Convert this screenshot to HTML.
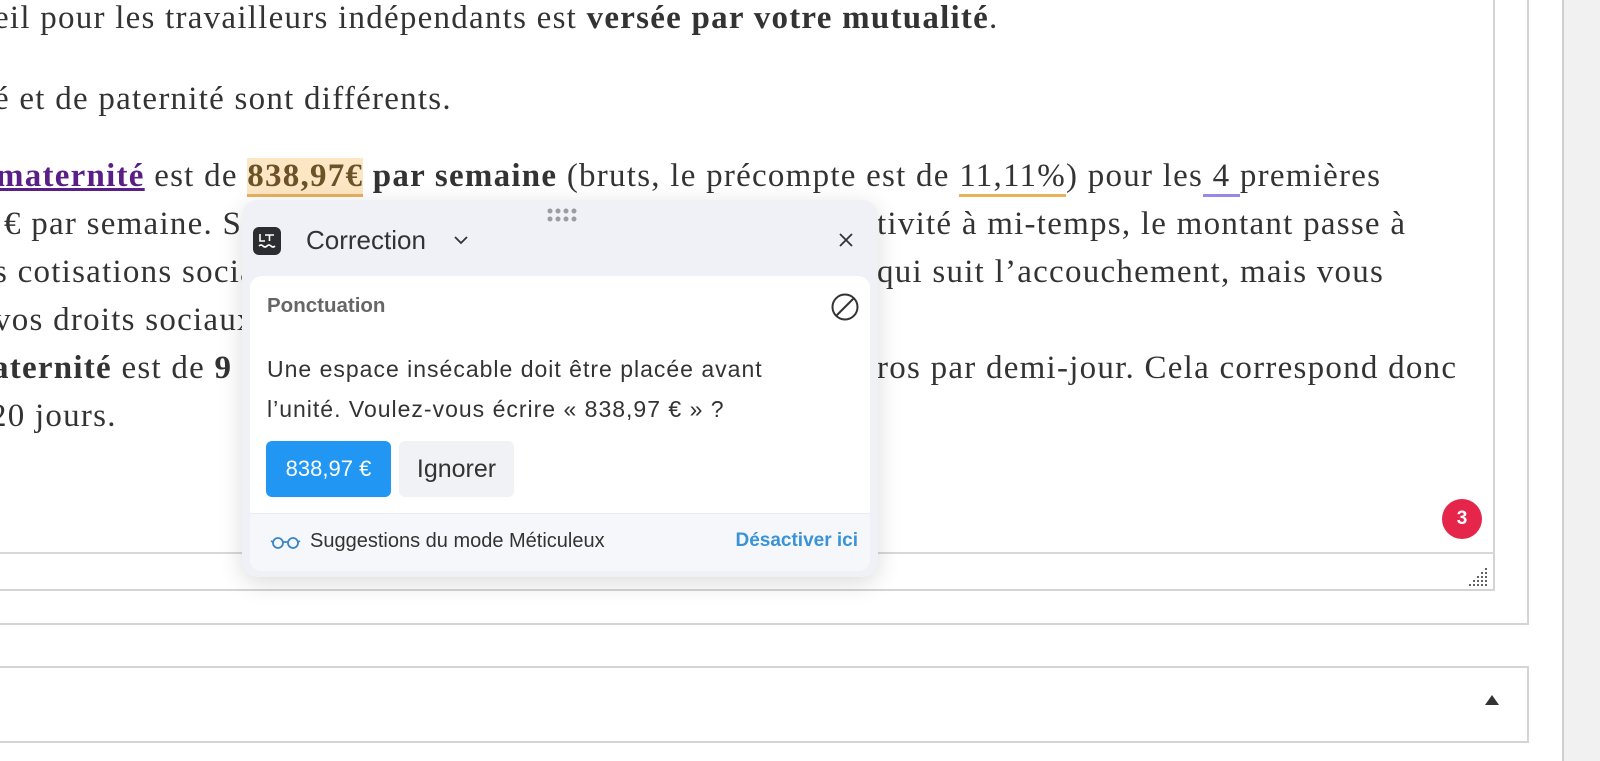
<!DOCTYPE html>
<html><head><meta charset="utf-8"><style>
body{margin:0;width:1600px;height:761px;overflow:hidden;background:#fff;position:relative;font-family:"Liberation Serif",serif;color:#333}
.l{position:absolute;white-space:nowrap;font-size:33px;letter-spacing:1.25px;line-height:40px;color:#333}
b{font-weight:bold}
.box{position:absolute;border:2px solid #d4d4d4;box-sizing:border-box}
.s{font-family:"Liberation Sans",sans-serif}
</style></head><body>
<div class="box" style="left:-4px;top:-4px;width:1533px;height:629px"></div>
<div class="box" style="left:-4px;top:-4px;width:1499px;height:595px"></div>
<div style="position:absolute;left:0;top:552px;width:1494px;height:2px;background:#d8d8d8"></div>
<div class="box" style="left:-4px;top:666px;width:1533px;height:77px"></div>
<div style="position:absolute;left:1562px;top:0;width:38px;height:761px;background:#f1f1f1;border-left:2px solid #cfcfcf"></div>
<div class="s" style="position:absolute;left:1442px;top:499px;width:40px;height:40px;border-radius:50%;background:#e5254a;color:#fff;font-weight:bold;font-size:19px;text-align:center;line-height:40px">3</div>
<div style="position:absolute;left:1485px;top:695px;width:0;height:0;border-left:7px solid transparent;border-right:7px solid transparent;border-bottom:10px solid #333"></div>
<svg style="position:absolute;left:1468px;top:566px" width="22" height="22"><g fill="#333"><circle cx="18" cy="3" r="1"/><circle cx="18" cy="7" r="1"/><circle cx="14" cy="7" r="1"/><circle cx="18" cy="11" r="1"/><circle cx="14" cy="11" r="1"/><circle cx="10" cy="11" r="1"/><circle cx="18" cy="15" r="1"/><circle cx="14" cy="15" r="1"/><circle cx="10" cy="15" r="1"/><circle cx="6" cy="15" r="1"/><circle cx="18" cy="19" r="1"/><circle cx="14" cy="19" r="1"/><circle cx="10" cy="19" r="1"/><circle cx="6" cy="19" r="1"/><circle cx="2" cy="19" r="1"/></g></svg>

<div class="l" style="left:-6px;top:-2px">eil pour les travailleurs indépendants est <b>versée par votre mutualité</b>.</div>
<div class="l" style="left:-6px;top:79px">é et de paternité sont différents.</div>
<div class="l" style="left:-4px;top:156px"><b style="color:#5a1f87;text-decoration:underline">maternité</b> est de <b style="background:#fde6c4;color:#6b5228;border-bottom:3px solid #e6b060">838,97€</b> <b>par semaine</b> (bruts, le précompte est de <span style="border-bottom:3px solid #e8b25a">11,11%</span>) pour les<span style="border-bottom:3px solid #9b87e8"> 4 </span>premières</div>
<div class="l" style="left:4px;top:204px">€ par semaine. S’</div>
<div class="l" style="left:877px;top:204px">tivité à mi-temps, le montant passe à</div>
<div class="l" style="left:-6px;top:252px">s cotisations socia</div>
<div class="l" style="left:877px;top:252px">qui suit l’accouchement, mais vous</div>
<div class="l" style="left:-6px;top:300px">vos droits sociaux</div>
<div class="l" style="left:-8px;top:348px"><b>aternité</b> est de <b>9</b></div>
<div class="l" style="left:877px;top:348px">ros par demi-jour. Cela correspond donc</div>
<div class="l" style="left:-10px;top:396px">20 jours.</div>

<div class="s" style="position:absolute;left:242px;top:200px;width:636px;height:377px;background:#eff1f6;border-radius:16px;box-shadow:0 6px 24px rgba(0,0,0,.14)">
  <svg style="position:absolute;left:305px;top:8px" width="32" height="16"><g fill="#9a9ca3"><circle cx="3" cy="3" r="2.5"/><circle cx="11" cy="3" r="2.5"/><circle cx="19" cy="3" r="2.5"/><circle cx="27" cy="3" r="2.5"/><circle cx="3" cy="11" r="2.5"/><circle cx="11" cy="11" r="2.5"/><circle cx="19" cy="11" r="2.5"/><circle cx="27" cy="11" r="2.5"/></g></svg>
  <div style="position:absolute;left:11px;top:27px;width:28px;height:28px;border-radius:6px;background:#2b2d31"><svg width="28" height="28"><g stroke="#fff" stroke-width="1.6" fill="none"><path d="M7 7v7h5M12 8h9M16.5 8v6"/><path d="M6 19q2-2 4 0t4 0t4 0t4 0"/></g></svg></div>
  <div style="position:absolute;left:64px;top:24px;font-size:26px;color:#333;line-height:32px">Correction</div>
  <svg style="position:absolute;left:211px;top:34px" width="16" height="12"><path d="M2 3l6 6 6-6" stroke="#333" stroke-width="1.8" fill="none"/></svg>
  <svg style="position:absolute;left:596px;top:32px" width="16" height="16"><path d="M2 2l12 12M14 2L2 14" stroke="#333" stroke-width="1.8"/></svg>
  <div style="position:absolute;left:8px;top:76px;width:620px;height:295px;background:#fff;border-radius:12px;overflow:hidden">
    <div style="position:absolute;left:17px;top:18px;font-size:20.5px;font-weight:bold;color:#666">Ponctuation</div>
    <svg style="position:absolute;left:580px;top:16px" width="30" height="30"><circle cx="15" cy="15" r="12.5" stroke="#333" stroke-width="2" fill="none"/><path d="M6 24L24 6" stroke="#333" stroke-width="2"/></svg>
    <div style="position:absolute;left:17px;top:73px;font-size:23px;letter-spacing:1px;line-height:40px;color:#333">Une espace insécable doit être placée avant<br>l’unité. Voulez-vous écrire « 838,97 € » ?</div>
    <div style="position:absolute;left:16px;top:165px;width:125px;height:56px;background:#2196f3;border-radius:6px;color:#fff;font-size:22px;line-height:56px;text-align:center">838,97 €</div>
    <div style="position:absolute;left:149px;top:165px;width:115px;height:56px;background:#f1f2f5;border-radius:6px;color:#333;font-size:25px;line-height:56px;text-align:center">Ignorer</div>
    <div style="position:absolute;left:0;top:237px;width:620px;height:58px;background:#f5f7fa;border-top:1px solid #e9ebef">
      <svg style="position:absolute;left:20px;top:22px" width="32" height="14"><g stroke="#3a86c8" stroke-width="1.8" fill="none"><circle cx="8" cy="7" r="5"/><circle cx="23" cy="7" r="5"/><path d="M13 6h5M1 5l2 1M30 5l-2 1"/></g></svg>
      <div style="position:absolute;left:60px;top:16px;font-size:20px;color:#333">Suggestions du mode Méticuleux</div>
      <div style="position:absolute;right:12px;top:16px;font-size:19px;color:#3a93d8;font-weight:bold">Désactiver ici</div>
    </div>
  </div>
</div>
</body></html>
